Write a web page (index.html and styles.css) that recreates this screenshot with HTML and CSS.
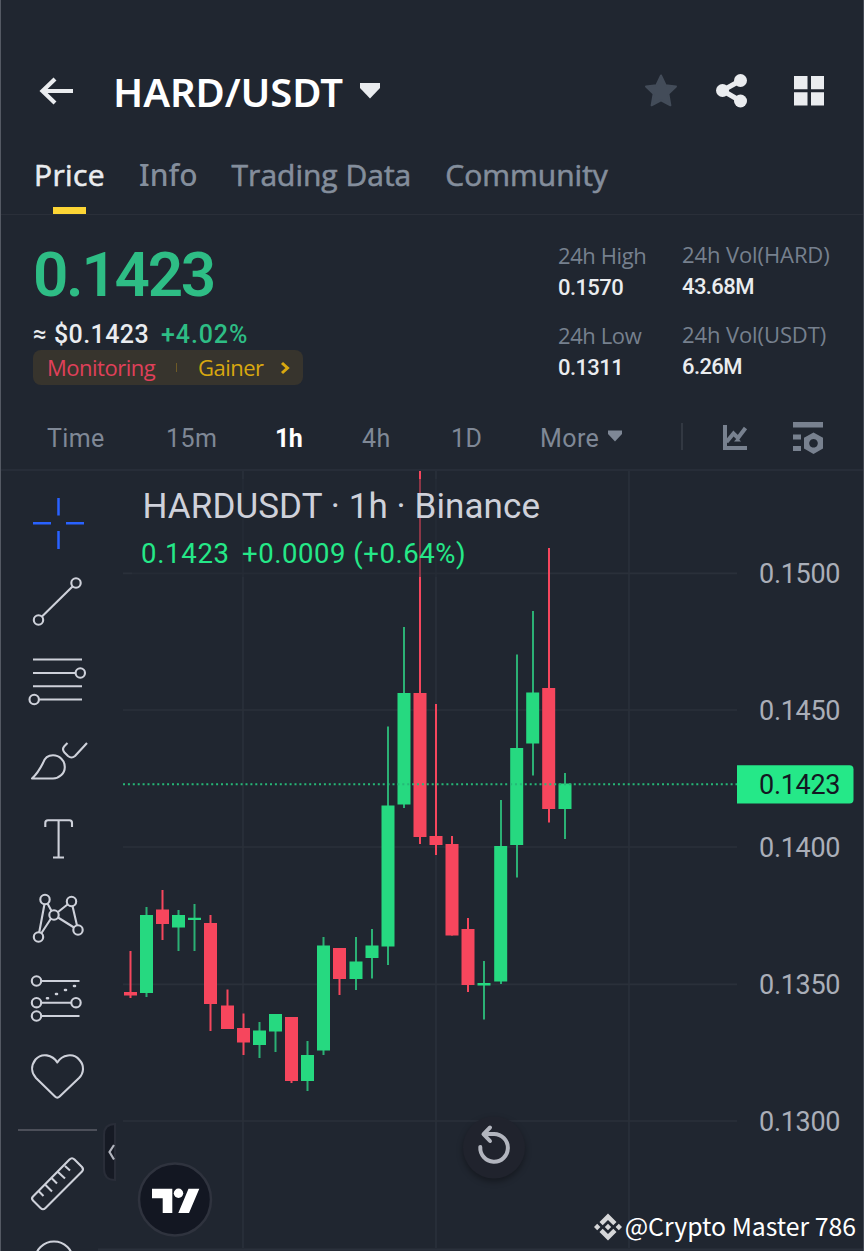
FILE: index.html
```html
<!DOCTYPE html>
<html lang="en">
<head>
<meta charset="utf-8">
<title>HARD/USDT</title>
<link rel="stylesheet" href="styles.css">
</head>
<body>
<div class="app">
  <header class="header">
    <svg class="back" viewBox="38 74 36 34"><path d="M73 91H43M55 79L42.500 91L55 103"/></svg>
    <h1 class="pair">HARD/USDT</h1>
    <svg class="caret" viewBox="358 81 24 20"><path d="M360 83H380V88L370 98.500L360 88Z"/></svg>
    <div class="actions">
      <svg class="star" viewBox="643 73 36 36"><path d="M661 75.500L665.600 85.200L676 86.500L668.400 93.900L670.400 105.300L661 100.400L651.600 105.300L653.600 93.900L646 86.500L656.400 85.200Z"/></svg>
      <svg class="share" viewBox="714 73 36 36"><path d="M740.500 80.500L722.500 90.500L740.500 101"/><circle cx="740.500" cy="80.500" r="6.500"/><circle cx="722.500" cy="90.500" r="6.500"/><circle cx="740.500" cy="101" r="6.500"/></svg>
      <svg class="grid" viewBox="791 73 36 36"><path d="M794 76h13.500v13.200h-13.500zM811 76h13v13.200h-13zM794 92.300h13.500v13.200h-13.500zM811 92.300h13v13.200h-13z"/></svg>
    </div>
  </header>

  <nav class="tabs">
    <span class="tab tab-active">Price</span>
    <span class="tab tab-info">Info</span>
    <span class="tab tab-trading">Trading Data</span>
    <span class="tab">Community</span>
  </nav>

  <section class="summary">
    <div class="quote">
      <div class="last">0.1423</div>
      <div class="fiat"><span class="approx">≈</span><span class="usd">$0.1423</span><span class="change">+4.02%</span></div>
      <div class="tags">
        <span class="monitoring">Monitoring</span>
        <i class="tag-sep"></i>
        <span class="gainer">Gainer</span>
        <svg class="chevron" viewBox="0 0 10 14"><path d="M2 2L7.500 7L2 12"/></svg>
      </div>
    </div>
    <dl class="stats">
      <div class="stat"><dt>24h High</dt><dd>0.1570</dd></div>
      <div class="stat stat-vol"><dt>24h Vol(HARD)</dt><dd>43.68M</dd></div>
      <div class="stat"><dt>24h Low</dt><dd>0.1311</dd></div>
      <div class="stat stat-vol"><dt>24h Vol(USDT)</dt><dd>6.26M</dd></div>
    </dl>
  </section>

  <div class="intervals">
    <span>Time</span><span>15m</span><span class="selected">1h</span><span>4h</span><span>1D</span>
    <span class="more">More<svg viewBox="0 0 14 12"><path d="M0 .5H14V4L7 11.500L0 4Z"/></svg></span>
    <i class="interval-sep"></i>
    <svg class="indicator" viewBox="722 422 28 29"><path d="M726 424V447H748M727.500 441L734.500 432.500L739 437L746.500 427"/><path class="solid" d="M735 440.500L738.500 436.500L742 440.500Z"/></svg>
    <svg class="settings" viewBox="792 420 34 34"><path d="M794 421h30v5.500h-30zM794 433.500h8v5h-8zM794 445h8v5h-8z"/><path fill-rule="evenodd" d="M814.500 431.500L824 436.700V447.500L814.500 453L805 447.500V436.700ZM814.500 438a4.300 4.300 0 1 0 .01 0Z"/></svg>
  </div>

  <main class="workspace">
    <aside class="toolbar">
      <svg class="tool cross" viewBox="18 484 80 79"><path d="M58.500 498V515.500M58.500 531V549M33 523.300H51M66 523.300H84"/></svg>
      <svg class="tool" viewBox="18 563 80 79"><path d="M42 616.500L72.500 586.500"/><circle cx="76" cy="583" r="4.700"/><circle cx="38.500" cy="620" r="4.700"/></svg>
      <svg class="tool" viewBox="18 642 80 79"><path d="M33 659.500H82M33 673H75M33 686.300H82M39 699.500H82"/><circle cx="80.300" cy="673" r="4.700"/><circle cx="34.200" cy="699.500" r="4.700"/></svg>
      <svg class="tool" viewBox="18 721 80 79"><path d="M32 778.500C37 774 41 767 43 763C45 757 49 755.300 53 755.300A11.800 11.600 0 0 1 53 778.500ZM67.500 743L64.500 746Q61.500 749 64.500 752.500L68 756Q71.500 759 75 756L87 743"/></svg>
      <svg class="tool" viewBox="18 800 80 79"><path d="M45.300 827V823Q45.300 820.300 48 820.300H69.500Q72 820.300 72 823V827M58.600 820.300V857.500M53 857.500H64"/></svg>
      <svg class="tool" viewBox="18 879 80 79"><path d="M44.500 904L39.200 932.500M47.500 903.500L51.500 911M58 912L67.500 904.500M72.500 906L77 925.500M58 917.500L74 927.500M51 918.500L41.500 933"/><circle cx="45" cy="899.500" r="4.700"/><circle cx="71.500" cy="901.500" r="4.700"/><circle cx="54" cy="915" r="4.700"/><circle cx="38.500" cy="937" r="4.700"/><circle cx="78" cy="930" r="4.700"/></svg>
      <svg class="tool" viewBox="18 958 80 79"><path d="M41 981H79.500M41 1002.700H71.500M41 1016H79.500"/><path class="dots" d="M47 998.300h1M56 994h1M65 990h1M74 986h1"/><circle cx="36.500" cy="981" r="4.700"/><circle cx="36.500" cy="1002.700" r="4.700"/><circle cx="76" cy="1002.700" r="4.700"/><circle cx="36.500" cy="1016" r="4.700"/></svg>
      <svg class="tool" viewBox="18 1037 80 79"><path d="M57.300 1062.500C52.500 1054.500 41.500 1052.500 35.500 1059.500C30.500 1066 31.500 1073 36 1078L55 1096.500Q57.300 1098.800 59.600 1096.500L79 1078C84 1073 84.500 1065.500 79.500 1060C73.500 1052.500 62 1054.500 57.300 1062.500Z"/></svg>
      <hr class="tool-rule">
      <svg class="tool" viewBox="18 1144 80 79"><path d="M33 1196.500L69.500 1159.500Q72 1157 74.500 1159.500L82 1167Q84 1169.500 82 1171.500L45.500 1208Q43 1210.500 40.500 1208L33 1200.500Q31 1198.500 33 1196.500ZM39 1191.500L43.500 1196M45 1184.500L52 1191.500M52 1178.500L57 1183.500M58 1172L65 1178.500M65 1166L70 1170.500"/></svg>
      <svg class="tool tool-cut" viewBox="18 1223 80 28"><circle cx="54" cy="1260.500" r="19"/></svg>
    </aside>
    <svg class="chart" viewBox="98 471 765 780">
      <path class="gridline" d="M243 471V1248M436 471V1248M629 471V1248M123 573.300H737M123 710H737M123 847H737M123 984.300H737M123 1121H737"/>
      <path class="frame" d="M98 1249.500H863"/>
      <path class="wick up" d="M146.500 907V997M178.500 910V951M194.500 904V951M259.500 1022V1058M275.500 1014V1052M307.500 1041V1091M323.500 937V1055M356 937V990M372 929V978.500M388 726.500V965M404 627V808M484 961V1019.500M501 800V984M517 654.500V877.500M533 611V775.500M565 773V839"/>
      <path class="wick down" d="M130.500 951V998M162.500 890V940M210.500 915V1031M227.500 989.500V1029M243.500 1013.500V1055M291.500 1017V1083M339.500 948V995M420 471V844M436 704V855M452 836V935.500M468 918V992M549 548V822.500"/>
      <path class="body up" d="M146.500 915V993M178.500 915V927.500M194.500 917.700V920M259.500 1030.500V1045M275.500 1014V1031.500M307.500 1055V1081M323.500 945.500V1050.500M356 961.500V979M372 945.500V958M388 805.500V946.500M404 693V804.500M484 983V985.500M500.700 846V981.500M516.700 748V845M532.700 692.500V743.500M565 783.500V809"/>
      <path class="body down" d="M130.500 992V995.500M162.500 909.500V924M210.500 923V1004M227.500 1005.500V1029M243.500 1028V1042.500M291.500 1017V1081M339.500 948V979M420 693V837M436 836V845M452 844V935.500M468 929V985M548.700 688V809"/>
      <path class="last-line" d="M123 784.300H737"/>
      <path class="legend-back" d="M132 479H548V530H480V577H132Z"/>
      <text class="legend-title" x="142.500" y="517.500" textLength="397.500">HARDUSDT · 1h · Binance</text>
      <text class="legend-price" x="141" y="563.200" textLength="88">0.1423</text>
      <text class="legend-price" x="242" y="563.200" textLength="223.500">+0.0009 (+0.64%)</text>
      <path class="price-tag" d="M737 765.200H849.500Q853.500 765.200 853.500 769.200V799.500Q853.500 803.500 849.500 803.500H737Z"/>
      <g class="axis">
        <text x="759" y="582.500" textLength="81.500">0.1500</text>
        <text x="759" y="719.500" textLength="81.500">0.1450</text>
        <text class="axis-last" x="759" y="793.800" textLength="81.500">0.1423</text>
        <text x="759" y="856.800" textLength="81.500">0.1400</text>
        <text x="759" y="993.800" textLength="81.500">0.1350</text>
        <text x="759" y="1131" textLength="81.500">0.1300</text>
      </g>
      <path class="handle" d="M115 1124Q104 1124 104 1135V1169Q104 1180 115 1180Z"/>
      <path class="handle-chevron" d="M114 1145L109.500 1152L114 1159.500"/>
      <circle class="tv-disc" cx="175" cy="1199.500" r="36"/>
      <path class="tv-mark" d="M152 1188.700H172.300V1213H162.700V1198.300H152ZM188.500 1188.700H199.300L189 1213H178.300Z"/>
      <circle class="tv-mark" cx="178.500" cy="1193.300" r="4.700"/>
      <circle class="reset-disc" cx="494" cy="1147.500" r="31"/>
      <path class="reset-arrow" d="M480.300 1147A13.800 13.800 0 1 0 494 1134.100H484M490 1127.500L483.500 1134.100L490 1141"/>
    </svg>
    <div class="watermark">
      <svg viewBox="594 1213 28 28"><path d="M608 1213.500L616.500 1222L613.300 1225.200L608 1219.900L602.700 1225.200L599.500 1222ZM608 1240.500L616.500 1232L613.300 1228.800L608 1234.100L602.700 1228.800L599.500 1232ZM608 1223.800L611.200 1227L608 1230.200L604.800 1227ZM597.200 1223.800L600.400 1227L597.200 1230.200L594 1227ZM618.800 1223.800L622 1227L618.800 1230.200L615.600 1227Z"/></svg>
      <span>@Crypto Master 786</span>
    </div>
  </main>
</div>
</body>
</html>
```
FILE: styles.css
```css
* { box-sizing: border-box; }
body { margin: 0; background: #202630; }
svg { display: block; flex: none; }
.app {
  width: 864px; height: 1251px; overflow: hidden;
  display: flex; flex-direction: column;
  border-left: 1px solid #545963; border-right: 1px solid #454a54;
  background: #202630; color: #eaecef;
  font-family: "Open Sans", "Noto Sans", sans-serif;
}

.header { height: 134px; padding: 48px 36px 0 37px; display: flex; align-items: center; }
.back { width: 36px; height: 34px; fill: none; stroke: #eaecef; stroke-width: 4.2; }
.pair {
  margin: 1px 0 0 39px; width: 230px; white-space: nowrap;
  font: 600 40px/48px "Noto Sans", sans-serif; color: #fff; letter-spacing: -.1px;
}
.caret { width: 24px; height: 20px; margin-left: 15px; fill: #eaecef; }
.actions { margin-left: auto; display: flex; gap: 35px; align-items: center; }
.actions svg { width: 36px; height: 36px; }
.share { fill: #eaecef; }
.share path { fill: none; stroke: #eaecef; stroke-width: 5; }
.star { fill: #434c59; stroke: #434c59; stroke-width: 2; stroke-linejoin: round; }
.grid { fill: #eaecef; margin-left: 6px; }

.tabs {
  height: 81px; padding: 18px 0 0 33px; display: flex; gap: 34px;
  border-bottom: 1px solid #2a2f39;
  font: 400 30px/46px "Open Sans", sans-serif; color: #848e9c; white-space: nowrap;
  -webkit-text-stroke: .6px currentColor;
}
.tab-active {
  color: #eaecef; letter-spacing: .4px; display: flex; flex-direction: column; align-items: center;
  justify-content: space-between;
}
.tab-active::after { content: ""; width: 33px; height: 7px; background: #fcd535; }
.tab-info { font-family: "Noto Sans", sans-serif; font-weight: 500; -webkit-text-stroke: 0; }

.summary { height: 187px; padding-left: 32px; display: flex; }
.quote { width: 525px; }
.last { margin-top: 21px; font: 600 62px/78px Roboto, sans-serif; letter-spacing: -2.3px; color: #2ebd85; }
.fiat { height: 36px; padding-top: 4px; display: flex; align-items: center; font: 500 25px/37px Roboto, sans-serif; }
.approx { width: 21px; font-size: 24px; }
.usd { width: 107px; letter-spacing: .4px; }
.change { color: #2ebd85; letter-spacing: .9px; }
.tags {
  width: 270px; height: 35px; padding-left: 14px; border-radius: 8px; background: #37342d;
  display: flex; align-items: center; font-size: 22px; line-height: 35px; letter-spacing: -.5px;
}
.monitoring { width: 129px; color: #e0405a; }
.tag-sep { width: 1px; height: 9px; background: #6e5a26; }
.gainer { margin-left: 21px; width: 82px; color: #d9a80f; }
.chevron { width: 10px; height: 14px; fill: none; stroke: #d9a80f; stroke-width: 3; }
.stats {
  margin: 23px 0 0; display: grid; grid-template-columns: 124px 160px;
  grid-auto-rows: 80px; white-space: nowrap;
}
.stat dt { font-size: 22px; line-height: 34px; letter-spacing: -.4px; color: #76808e; }
.stat dd { margin: 0; padding-top: 1px; font: 500 22px/30px Roboto, sans-serif; letter-spacing: -.6px; color: #eaecef; }
.stat-vol { margin-top: -1px; }
.stat-vol dt { letter-spacing: -.1px; }

.intervals {
  height: 69px; padding-left: 46px; padding-top: 4px; display: grid; align-items: center;
  grid-template-columns: 119px 109px 87px 89px 89px 141px 40px 70px 34px;
  border-bottom: 2px solid #272d38;
  font: 400 25px/30px Roboto, sans-serif; letter-spacing: .4px; color: #7f8896;
}
.intervals > span { padding-top: 2px; }
.selected { color: #fff; font-weight: 700; letter-spacing: -.5px; }
.more { display: flex; align-items: center; }
.more svg { width: 14px; height: 12px; margin: -5px 0 0 9px; fill: #7f8896; }
.interval-sep { width: 2px; height: 27px; margin-top: -2px; background: #323842; }
.indicator { width: 28px; height: 29px; margin-top: -1px; fill: none; stroke: #78818f; stroke-width: 4; }
.indicator .solid { fill: #78818f; stroke: none; }
.settings { width: 34px; height: 34px; fill: #78818f; }

.workspace { position: relative; height: 780px; display: flex; }
.toolbar { width: 97px; padding: 13px 0 0 17px; display: flex; flex-direction: column; }
.tool { width: 80px; height: 79px; fill: none; stroke: #ced1da; stroke-width: 2.1; stroke-linejoin: round; }
.tool-cut { height: 28px; }
.cross { stroke: #2962ff; stroke-width: 2.5; }
.dots { stroke-width: 2.6; stroke-linecap: round; }
.tool-rule { width: 79px; height: 2px; margin: 13px 0; border: 0; background: #4c4f59; }
.chart { width: 765px; height: 780px; fill: none; font-family: Roboto, sans-serif; }
.gridline { stroke: #2a303a; stroke-width: 1.7; }
.frame { stroke: #2a303b; stroke-width: 2; }
.wick { stroke-width: 2; }
.body { stroke-width: 13; }
.up { stroke: #26d980; }
.down { stroke: #f6465d; }
.wick.up { stroke: #2bb074; }
.last-line { stroke: #26b877; stroke-width: 2; stroke-dasharray: 2 2.9; }
.legend-back { fill: #202630; opacity: .5; }
.legend-title { font-size: 35px; fill: #cfd1da; }
.legend-price { font-size: 27.5px; fill: #25e888; }
.price-tag { fill: #25e888; }
.axis { font-size: 27px; fill: #aaaeb8; }
.axis-last { fill: #131722; }
.handle { fill: #161a24; stroke: #292d38; stroke-width: 2; }
.handle-chevron { stroke: #b2b5be; stroke-width: 2.2; }
.tv-disc { fill: #131722; stroke: #2f333e; stroke-width: 2.5; }
.tv-mark { fill: #fff; }
.reset-disc { fill: #20232d; filter: drop-shadow(0 3px 3px rgba(0, 0, 0, .35)); }
.reset-arrow { stroke: #b2b5be; stroke-width: 4; stroke-linejoin: round; stroke-linecap: round; }
.watermark {
  position: absolute; right: 7px; bottom: 8px; display: flex; align-items: center; gap: 3px;
  font: 400 24.8px/36px "Noto Sans CJK SC", sans-serif; color: #fff; white-space: nowrap;
}
.watermark svg { width: 28px; height: 28px; margin-top: 3px; fill: #d5d6d8; }
```
